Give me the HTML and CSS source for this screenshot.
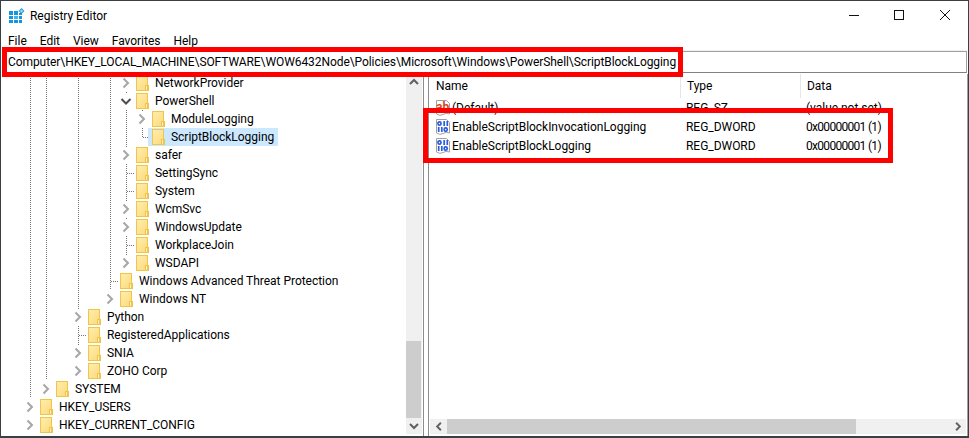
FILE: index.html
```html
<!DOCTYPE html>
<html lang="en">
<head>
<meta charset="utf-8">
<title>Registry Editor</title>
<link rel="stylesheet" href="styles.css">
</head>
<body>
<svg class="defs" width="0" height="0" aria-hidden="true">
  <defs>
    <linearGradient id="fg" x1="0" y1="0" x2="1" y2="1">
      <stop offset="0" stop-color="#ffeeb0"/>
      <stop offset="1" stop-color="#fcd97a"/>
    </linearGradient>
    <symbol id="folder" viewBox="0 0 13 16">
      <rect x="0.5" y="0.5" width="11" height="15" fill="url(#fg)" stroke="#f0c548"/>
      <rect x="9" y="10" width="4" height="6" fill="#f0c44c"/>
      <rect x="10" y="11" width="1" height="4" fill="#fff0b8"/>
    </symbol>
    <symbol id="chev-r" viewBox="0 0 16 16">
      <path d="M7.5 3.5 L12 8 L7.5 12.5" fill="none" stroke="#a6a6a6" stroke-width="2"/>
    </symbol>
    <symbol id="chev-d" viewBox="0 0 16 16">
      <path d="M5.5 6 L10 10.5 L14.500 6" fill="none" stroke="#4d4d4d" stroke-width="2"/>
    </symbol>
    <symbol id="paper" viewBox="0 0 16 16">
      <path d="M1.500 .5 H11.500 L14.500 3.500 V14 Q11 12.500 8 14.500 T1.500 14 Z" fill="#fff" stroke="#a0a0a0"/>
    </symbol>
    <symbol id="bin" viewBox="0 0 16 16">
      <path d="M1.500 .5 H11.500 L14.500 3.500 V14 Q11 12.500 8 14.500 T1.500 14 Z" fill="#fff" stroke="#a0a0a0"/>
      <g fill="none" stroke="#2b5cdc" stroke-width="1.700">
        <rect x="3" y="2.800" width="3" height="3.400" rx="1.400"/>
        <path d="M9.200 2V7M12.300 2V7M3.700 8V13M6.800 8V13"/>
        <rect x="9.200" y="8.800" width="3" height="3.400" rx="1.400"/>
      </g>
    </symbol>
  </defs>
</svg>

<div class="window">
  <header class="titlebar">
    <svg class="app-icon" width="16" height="16" viewBox="0 0 16 16" aria-hidden="true">
      <g fill="#1596dc">
        <rect x="0" y="3" width="4" height="4"/><rect x="5" y="3" width="4" height="4"/><rect x="10" y="5" width="3" height="2"/>
        <rect x="0" y="8" width="4" height="3"/><rect x="5" y="8" width="4" height="3" fill="#3fb4ec"/><rect x="10" y="8" width="3" height="3"/>
        <rect x="0" y="12" width="4" height="3"/><rect x="5" y="12" width="4" height="3"/><rect x="10" y="12" width="3" height="3"/>
      </g>
      <path d="M12.500 0 L15.500 3 L12.500 6 L9.500 3 Z" fill="#2f9ad8"/>
      <path d="M12.500 1.500 L14 3 L12.500 4.500 L11 3 Z" fill="#a5dcf5"/>
    </svg>
    <span class="title">Registry Editor</span>
    <div class="controls">
      <svg class="ctl" width="46" height="30" viewBox="0 0 46 30" aria-hidden="true"><path d="M18 14.500H28" stroke="#111" fill="none"/></svg>
      <svg class="ctl" width="46" height="30" viewBox="0 0 46 30" aria-hidden="true"><rect x="17.500" y="9.500" width="9" height="9" stroke="#111" fill="none"/></svg>
      <svg class="ctl" width="46" height="30" viewBox="0 0 46 30" aria-hidden="true"><path d="M17 9L27 19M27 9L17 19" stroke="#111" fill="none"/></svg>
    </div>
  </header>

  <nav class="menubar">
    <span class="menu">File</span>
    <span class="menu">Edit</span>
    <span class="menu">View</span>
    <span class="menu">Favorites</span>
    <span class="menu">Help</span>
  </nav>

  <div class="addressbar">Computer\HKEY_LOCAL_MACHINE\SOFTWARE\WOW6432Node\Policies\Microsoft\Windows\PowerShell\ScriptBlockLogging</div>

  <main class="panes">
    <section class="tree">
      <svg class="guides" width="405" height="362" viewBox="0 0 405 362" aria-hidden="true">
        <g stroke="#777" stroke-dasharray="1 1" fill="none">
          <path d="M29.500 2V324M45.500 2V306M77.500 2V288M109.500 2V216M125.500 2V189M141.500 36V64"/>
          <path d="M142 63.500H150M126 99.500H134M126 117.500H134M126 171.500H134M110 207.500H118M78 261.500H86"/>
        </g>
      </svg>
      <div class="rows">
        <div class="row lv6"><span class="chev"><svg width="16" height="16"><use href="#chev-r"/></svg></span><span class="node"><svg class="folder"><use href="#folder"/></svg>NetworkProvider</span></div>
        <div class="row lv6"><span class="chev"><svg width="16" height="16"><use href="#chev-d"/></svg></span><span class="node"><svg class="folder"><use href="#folder"/></svg>PowerShell</span></div>
        <div class="row lv7"><span class="chev"><svg width="16" height="16"><use href="#chev-r"/></svg></span><span class="node"><svg class="folder"><use href="#folder"/></svg>ModuleLogging</span></div>
        <div class="row lv7"><span class="chev none"></span><span class="node selected"><svg class="folder"><use href="#folder"/></svg>ScriptBlockLogging</span></div>
        <div class="row lv6"><span class="chev"><svg width="16" height="16"><use href="#chev-r"/></svg></span><span class="node"><svg class="folder"><use href="#folder"/></svg>safer</span></div>
        <div class="row lv6"><span class="chev none"></span><span class="node"><svg class="folder"><use href="#folder"/></svg>SettingSync</span></div>
        <div class="row lv6"><span class="chev none"></span><span class="node"><svg class="folder"><use href="#folder"/></svg>System</span></div>
        <div class="row lv6"><span class="chev"><svg width="16" height="16"><use href="#chev-r"/></svg></span><span class="node"><svg class="folder"><use href="#folder"/></svg>WcmSvc</span></div>
        <div class="row lv6"><span class="chev"><svg width="16" height="16"><use href="#chev-r"/></svg></span><span class="node"><svg class="folder"><use href="#folder"/></svg>WindowsUpdate</span></div>
        <div class="row lv6"><span class="chev none"></span><span class="node"><svg class="folder"><use href="#folder"/></svg>WorkplaceJoin</span></div>
        <div class="row lv6"><span class="chev"><svg width="16" height="16"><use href="#chev-r"/></svg></span><span class="node"><svg class="folder"><use href="#folder"/></svg>WSDAPI</span></div>
        <div class="row lv5"><span class="chev none"></span><span class="node"><svg class="folder"><use href="#folder"/></svg>Windows Advanced Threat Protection</span></div>
        <div class="row lv5"><span class="chev"><svg width="16" height="16"><use href="#chev-r"/></svg></span><span class="node"><svg class="folder"><use href="#folder"/></svg>Windows NT</span></div>
        <div class="row lv3"><span class="chev"><svg width="16" height="16"><use href="#chev-r"/></svg></span><span class="node"><svg class="folder"><use href="#folder"/></svg>Python</span></div>
        <div class="row lv3"><span class="chev none"></span><span class="node"><svg class="folder"><use href="#folder"/></svg>RegisteredApplications</span></div>
        <div class="row lv3"><span class="chev"><svg width="16" height="16"><use href="#chev-r"/></svg></span><span class="node"><svg class="folder"><use href="#folder"/></svg>SNIA</span></div>
        <div class="row lv3"><span class="chev"><svg width="16" height="16"><use href="#chev-r"/></svg></span><span class="node"><svg class="folder"><use href="#folder"/></svg>ZOHO Corp</span></div>
        <div class="row lv1"><span class="chev"><svg width="16" height="16"><use href="#chev-r"/></svg></span><span class="node"><svg class="folder"><use href="#folder"/></svg>SYSTEM</span></div>
        <div class="row lv0"><span class="chev"><svg width="16" height="16"><use href="#chev-r"/></svg></span><span class="node"><svg class="folder"><use href="#folder"/></svg>HKEY_USERS</span></div>
        <div class="row lv0"><span class="chev"><svg width="16" height="16"><use href="#chev-r"/></svg></span><span class="node"><svg class="folder"><use href="#folder"/></svg>HKEY_CURRENT_CONFIG</span></div>
      </div>
      <div class="vscroll">
        <div class="sb-btn"><svg width="16" height="16" viewBox="0 0 16 16" aria-hidden="true"><path d="M4 10L8 6L12 10" class="arrow"/></svg></div>
        <div class="v-track"></div>
        <div class="v-thumb"></div>
        <div class="sb-btn"><svg width="16" height="16" viewBox="0 0 16 16" aria-hidden="true"><path d="M4 6L8 10L12 6" class="arrow"/></svg></div>
      </div>
    </section>

    <section class="list">
      <div class="list-head">
        <span class="col name">Name</span>
        <span class="col type sep">Type</span>
        <span class="col data sep">Data</span>
      </div>
      <div class="list-body">
        <div class="item">
          <span class="col name"><span class="val-icon"><svg width="16" height="16"><use href="#paper"/></svg><span class="ab">ab</span></span>(Default)</span>
          <span class="col type">REG_SZ</span>
          <span class="col data">(value not set)</span>
        </div>
        <div class="item">
          <span class="col name"><span class="val-icon"><svg width="16" height="16"><use href="#bin"/></svg></span>EnableScriptBlockInvocationLogging</span>
          <span class="col type">REG_DWORD</span>
          <span class="col data hex">0x00000001 (1)</span>
        </div>
        <div class="item">
          <span class="col name"><span class="val-icon"><svg width="16" height="16"><use href="#bin"/></svg></span>EnableScriptBlockLogging</span>
          <span class="col type">REG_DWORD</span>
          <span class="col data hex">0x00000001 (1)</span>
        </div>
      </div>
      <div class="hscroll">
        <div class="sb-btn wide"><svg width="16" height="15" viewBox="0 0 16 16" aria-hidden="true"><path d="M10 4L6 8L10 12" class="arrow"/></svg></div>
        <div class="h-thumb"></div>
        <div class="h-track"></div>
        <div class="sb-btn wide"><svg width="16" height="15" viewBox="0 0 16 16" aria-hidden="true"><path d="M6 4L10 8L6 12" class="arrow"/></svg></div>
      </div>
    </section>
  </main>

  <div class="callout callout-address"></div>
  <div class="callout callout-values"></div>
</div>
</body>
</html>
```

FILE: styles.css
```css
* { box-sizing: border-box; }

html, body {
  margin: 0;
  padding: 0;
  background: #fff;
}

body {
  font-family: "Roboto", "Open Sans", "Liberation Sans", sans-serif;
  font-size: 12px;
  letter-spacing: -0.03px;
  color: #000;
}

.defs { position: absolute; }

.window {
  position: relative;
  width: 969px;
  height: 438px;
  display: flex;
  flex-direction: column;
  background: #fff;
  border: 1px solid #3a3f45;
  border-bottom-width: 2px;
  overflow: hidden;
}

/* title bar */
.titlebar {
  height: 30px;
  flex: none;
  display: flex;
  align-items: center;
  padding-left: 8px;
}

.app-icon { margin-right: 5px; }

.title { font-size: 12px; }

.controls {
  margin-left: auto;
  display: flex;
  margin-right: -1px;
}

.ctl { display: block; }

/* menu */
.menubar {
  height: 19px;
  margin-bottom: 1px;
  flex: none;
  display: flex;
  align-items: center;
  padding-left: 7px;
  gap: 13px;
}

.menu { display: block; }

/* address */
.addressbar {
  flex: none;
  height: 22px;
  margin: 0 1px 1px 3px;
  padding-left: 4px;
  display: flex;
  align-items: center;
  border-top: 1px solid #a0a0a0;
  border-right: 1px solid #a0a0a0;
  border-bottom: 1px solid #808080;
  box-shadow: 0 -1px 0 #f0f0f0;
  white-space: nowrap;
  letter-spacing: -0.075px;
}

/* panes */
.panes {
  flex: 1;
  min-height: 0;
  display: flex;
  gap: 4px;
}

.tree {
  position: relative;
  width: 423px;
  flex: none;
  display: flex;
  border-right: 1px solid #8c8c8c;
  padding-right: 1px;
}

.guides {
  position: absolute;
  left: 0;
  top: 0;
}

.rows {
  position: relative;
  flex: 1;
  min-width: 0;
  overflow: hidden;
}

.row {
  height: 18px;
  display: flex;
  align-items: center;
  white-space: nowrap;
}

.lv0 { padding-left: 19px; }
.lv1 { padding-left: 35px; }
.lv3 { padding-left: 67px; }
.lv5 { padding-left: 99px; }
.lv6 { padding-left: 115px; }
.lv7 { padding-left: 131px; }

.chev {
  width: 16px;
  height: 16px;
  flex: none;
  background: #fff;
}

.chev svg { display: block; }

.chev.none { background: transparent; }

.node {
  display: flex;
  align-items: center;
  height: 18px;
  padding: 0 4px;
}

.node.selected { background: #cce8ff; }

.folder {
  width: 13px;
  height: 16px;
  margin-right: 6px;
  flex: none;
}

/* scrollbars */
.vscroll {
  width: 16px;
  flex: none;
  height: 360px;
  display: flex;
  flex-direction: column;
  background: #f0f0f0;
}

.sb-btn {
  width: 16px;
  height: 16px;
  flex: none;
  display: flex;
  align-items: center;
  justify-content: center;
  background: #f0f0f0;
}

.sb-btn.wide {
  width: 17px;
  height: 15px;
}

.sb-btn svg { display: block; }

.arrow {
  fill: none;
  stroke: #606060;
  stroke-width: 2;
}

.v-track { flex: 1; }

.v-thumb {
  height: 77px;
  margin-right: 1px;
  flex: none;
  background: #cdcdcd;
}

.hscroll {
  height: 15px;
  flex: none;
  display: flex;
  margin: 0 1px 2px 1px;
  background: #f0f0f0;
}

.h-thumb {
  width: 409px;
  flex: none;
  background: #cdcdcd;
}

.h-track { flex: 1; }

/* list */
.list {
  flex: 1;
  min-width: 0;
  display: flex;
  flex-direction: column;
  border-left: 1px solid #8c8c8c;
  border-right: 1px solid #a0a0a0;
}

.list-head {
  height: 24px;
  flex: none;
  display: flex;
  align-items: center;
}

.list-body {
  flex: 1;
  min-height: 0;
}

.item {
  height: 19px;
  display: flex;
  align-items: center;
}

.col { display: flex; align-items: center; white-space: nowrap; }

.name { width: 251px; padding-left: 7px; flex: none; }
.type { width: 120px; padding-left: 6px; flex: none; }
.data { flex: 1; padding-left: 6px; }
.hex { letter-spacing: -0.7px; }

.item .name { padding-left: 6px; }

.sep {
  height: 24px;
  border-left: 1px solid #e5e5e5;
}

.list-head .name { height: 24px; }

.val-icon {
  position: relative;
  width: 16px;
  height: 16px;
  margin-right: 1px;
  flex: none;
}

.val-icon svg { display: block; }

.ab {
  position: absolute;
  left: 1px;
  top: 0;
  font-size: 12px;
  font-weight: 700;
  color: #e0432a;
  line-height: 14px;
}

/* annotations drawn over the screenshot */
.callout {
  position: absolute;
  border: 5px solid #fe0000;
}

.callout-address {
  left: 1px;
  top: 46px;
  width: 681px;
  height: 30px;
}

.callout-values {
  left: 422px;
  top: 107px;
  width: 470px;
  height: 55px;
}
```
